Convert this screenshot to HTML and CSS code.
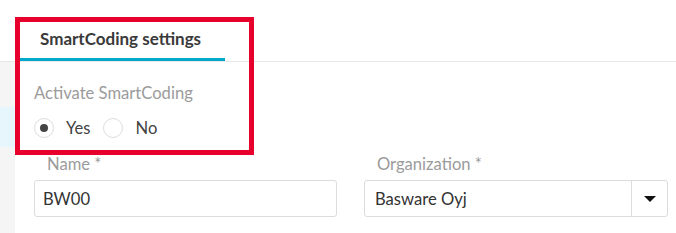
FILE: index.html
```html
<!DOCTYPE html>
<html>
<head>
<meta charset="utf-8">
<link rel="stylesheet" href="styles.css">
</head>
<body>
<div class="page">
  <header class="tabs">
    <div class="tab active">SmartCoding settings</div>
  </header>
  <div class="body">
    <aside class="sidebar">
      <div class="side-item"></div>
      <div class="side-item active"></div>
    </aside>
    <main class="content">
      <section class="activate">
        <div class="group-label">Activate SmartCoding</div>
        <div class="radios">
          <label class="radio checked"><span class="circle"></span><span class="rtext">Yes</span></label>
          <label class="radio"><span class="circle"></span><span class="rtext">No</span></label>
        </div>
      </section>
      <div class="fields">
        <div class="field">
          <div class="field-label">Name *</div>
          <div class="input">BW00</div>
        </div>
        <div class="field">
          <div class="field-label">Organization *</div>
          <div class="select">
            <span class="value">Basware Oyj</span>
            <span class="toggle"><span class="caret"></span></span>
          </div>
        </div>
      </div>
    </main>
  </div>
  <div class="highlight"></div>
</div>
</body>
</html>
```
FILE: styles.css
```css
html, body {
  margin: 0;
  padding: 0;
  background: #fff;
}
body {
  font-family: Lato, "Open Sans", sans-serif;
  color: #333;
}
.page {
  position: relative;
  width: 676px;
  height: 233px;
  overflow: hidden;
}
.tabs {
  height: 61px;
  border-bottom: 1px solid #e8e8e8;
  display: flex;
  align-items: flex-end;
  padding-left: 20px;
}
.tab {
  box-sizing: border-box;
  width: 205px;
  height: 61px;
  padding: 29px 0 0 20px;
  font-size: 17px;
  font-weight: 700;
  color: #3a3a3a;
  line-height: 20px;
}
.tab.active {
  border-bottom: 3px solid #00a8cc;
}
.body {
  display: flex;
  height: 171px;
}
.sidebar {
  width: 15px;
  background: #f5f5f5;
  flex: none;
}
.side-item {
  height: 45px;
}
.side-item.active {
  height: 40px;
  background: #e6f6fc;
}
.content {
  flex: 1;
  padding: 21px 9px 0 19px;
}
.group-label {
  font-size: 16.6px;
  line-height: 20px;
  color: #9b9b9b;
}
.radios {
  display: flex;
  align-items: center;
  margin-top: 14px;
  height: 22px;
}
.radio {
  display: flex;
  align-items: center;
  font-size: 16.6px;
  color: #444;
  margin-right: 13px;
}
.circle {
  box-sizing: border-box;
  width: 20px;
  height: 20px;
  border: 1px solid #dcdcdc;
  border-radius: 50%;
  background: #fff;
  display: flex;
  align-items: center;
  justify-content: center;
  margin-right: 12px;
}
.radio.checked .circle::after {
  content: "";
  width: 8px;
  height: 8px;
  border-radius: 50%;
  background: #444;
}
.fields {
  display: flex;
  gap: 26px;
  margin-top: 15px;
}
.field {
  width: 304px;
}
.field-label {
  font-size: 16.6px;
  line-height: 20px;
  color: #9b9b9b;
  padding-left: 13px;
  margin-bottom: 6px;
}
.input, .select {
  box-sizing: border-box;
  height: 37px;
  border: 1px solid #dcdcdc;
  border-radius: 3px;
  font-size: 16.6px;
  color: #333;
  display: flex;
  align-items: center;
}
.input {
  width: 303px;
  padding-left: 8px;
}
.select {
  width: 304px;
}
.select .value {
  flex: 1;
  padding-left: 10px;
}
.toggle {
  width: 35px;
  height: 100%;
  border-left: 1px solid #dcdcdc;
  display: flex;
  align-items: center;
  justify-content: center;
}
.caret {
  width: 0;
  height: 0;
  border-left: 6px solid transparent;
  border-right: 6px solid transparent;
  border-top: 6px solid #111;
}
.highlight {
  position: absolute;
  left: 15px;
  top: 17px;
  width: 229px;
  height: 128px;
  border: 5px solid #e6002b;
  pointer-events: none;
}
```
